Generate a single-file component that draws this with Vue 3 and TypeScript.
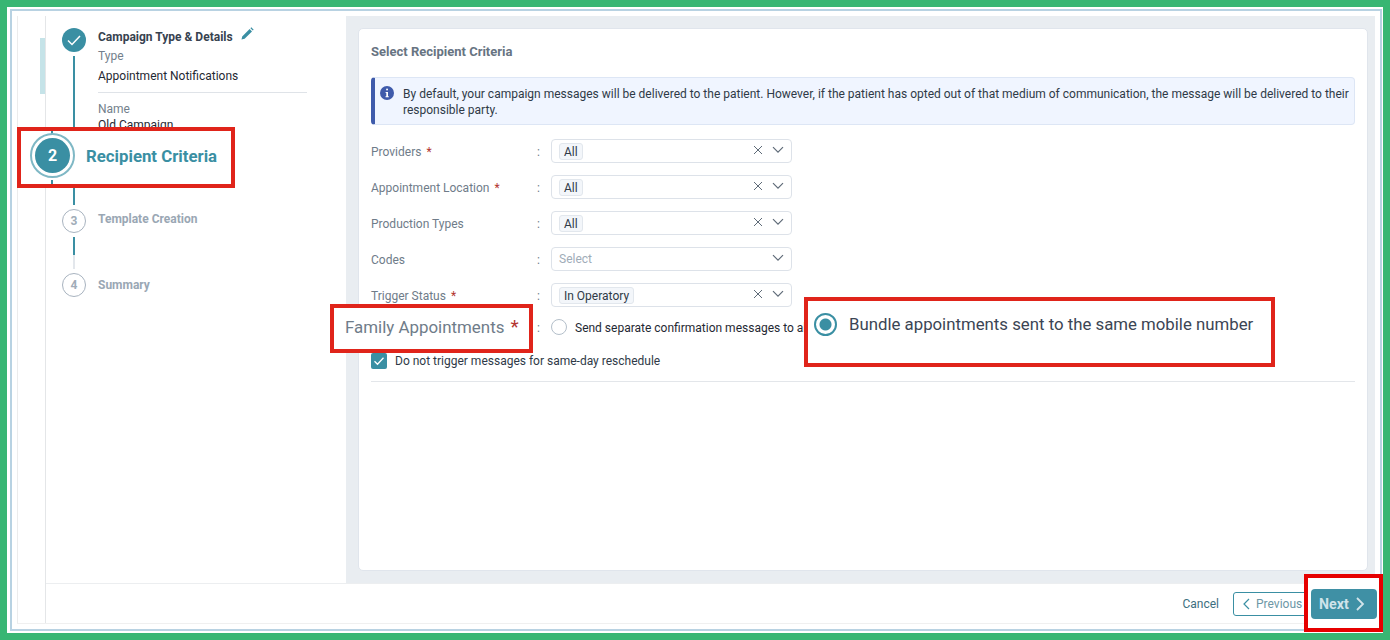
<script setup lang="ts">
interface Criteria {
  label: string
  required: boolean
  tag?: string
}

const criteria: Criteria[] = [
  { label: 'Providers', required: true, tag: 'All' },
  { label: 'Appointment Location', required: true, tag: 'All' },
  { label: 'Production Types', required: false, tag: 'All' },
  { label: 'Codes', required: false },
  { label: 'Trigger Status', required: true, tag: 'In Operatory' },
]
</script>

<template>
  <div class="screen">
    <div class="window">
      <div class="shell">
        <div class="rail"><div class="rail-mark"></div></div>

        <div class="content">
          <div class="workspace">
            <aside class="sidebar">
              <div class="step step-first">
                <div class="step-track">
                  <span class="dot dot-done">
                    <svg width="14" height="14" viewBox="0 0 14 14" fill="none">
                      <path d="M1 7.5l4 4L13 3" stroke="#fff" stroke-width="1.5" />
                    </svg>
                  </span>
                  <span class="line"></span>
                </div>
                <div class="step-body">
                  <div class="step-title">
                    Campaign Type &amp; Details
                    <svg class="pencil" width="13" height="13" viewBox="0 0 13 13">
                      <path d="M0.5 12.5l0.7-3.1L8.6 2l2.4 2.4-7.4 7.4zM9.4 1.2l0.9-0.9 2.4 2.4-0.9 0.9z" fill="#3a8fa3" />
                    </svg>
                  </div>
                  <div class="meta-label">Type</div>
                  <div class="meta-value">Appointment Notifications</div>
                  <div class="meta-rule"></div>
                  <div class="meta-label">Name</div>
                  <div class="meta-value">Old Campaign</div>
                </div>
              </div>

              <div class="step step-third">
                <div class="step-track">
                  <span class="dot">3</span>
                  <span class="line line-split"></span>
                </div>
                <div class="step-title step-title-muted">Template Creation</div>
              </div>

              <div class="step">
                <div class="step-track"><span class="dot">4</span></div>
                <div class="step-title step-title-muted step-title-last">Summary</div>
              </div>
            </aside>

            <main class="panel">
              <section class="card">
                <h2 class="card-title">Select Recipient Criteria</h2>

                <div class="notice">
                  <svg class="notice-icon" width="14" height="14" viewBox="0 0 14 14">
                    <circle cx="7" cy="7" r="7" fill="#3f5bab" />
                    <rect x="6.1" y="2.6" width="1.9" height="1.9" rx="0.9" fill="#fff" />
                    <path d="M5.6 6h2.4v4.2h0.8v1H5.5v-1h0.8V7H5.6z" fill="#fff" />
                  </svg>
                  <p>
                    By default, your campaign messages will be delivered to the patient. However, if the patient has
                    opted out of that medium of communication, the message will be delivered to their responsible party.
                  </p>
                </div>

                <div class="form">
                  <div v-for="item in criteria" :key="item.label" class="form-row">
                    <label class="form-label">
                      {{ item.label }}
                      <span v-if="item.required" class="req">*</span>
                    </label>
                    <span class="colon">:</span>
                    <div class="select">
                      <span v-if="item.tag" class="tag">{{ item.tag }}</span>
                      <span v-else class="placeholder">Select</span>
                      <svg v-if="item.tag" class="clear" width="10" height="10" viewBox="0 0 10 10" fill="none">
                        <path d="M1 1l8 8M9 1l-8 8" stroke="#5f6b78" stroke-width="1" />
                      </svg>
                      <svg class="chevron" width="12" height="8" viewBox="0 0 12 8" fill="none">
                        <path d="M1 1.2l5 5 5-5" stroke="#5f6b78" stroke-width="1.2" />
                      </svg>
                    </div>
                  </div>

                  <div class="form-row form-row-radio">
                    <span></span>
                    <span class="colon">:</span>
                    <div class="radio-option">
                      <span class="radio"></span>
                      <span>Send separate confirmation messages to all</span>
                    </div>
                  </div>
                </div>

                <div class="check-row">
                  <span class="checkbox">
                    <svg width="12" height="12" viewBox="0 0 12 12" fill="none">
                      <path d="M1.5 6.3l3 3L10.5 2.8" stroke="#fff" stroke-width="1.3" />
                    </svg>
                  </span>
                  Do not trigger messages for same-day reschedule
                </div>
                <div class="card-rule"></div>
              </section>
            </main>
          </div>

          <footer class="footer">
            <span class="cancel">Cancel</span>
            <button class="prev" type="button">
              <svg width="9" height="12" viewBox="0 0 9 12" fill="none">
                <path d="M7 1L2 6l5 5" stroke="#3a8fa3" stroke-width="1.2" />
              </svg>
              Previous
            </button>
          </footer>
        </div>
      </div>
    </div>

    <!-- red annotation boxes laid over the screenshot -->
    <div class="callout callout-step">
      <span class="stub stub-top"></span>
      <span class="big-dot"><span>2</span></span>
      <span class="stub stub-bottom"></span>
      <span class="callout-step-text">Recipient Criteria</span>
    </div>

    <div class="callout callout-family">
      Family Appointments <span class="req">*</span>
    </div>

    <div class="callout callout-bundle">
      <span class="big-radio"></span>
      Bundle appointments sent to the same mobile number
    </div>

    <div class="callout callout-next">
      <button class="next" type="button">
        Next
        <svg width="11" height="14" viewBox="0 0 11 14" fill="none">
          <path d="M2 1L8 7l-6 6" stroke="#d3e4ea" stroke-width="1.8" />
        </svg>
      </button>
    </div>
  </div>
</template>

<style>
html,
body {
  margin: 0;
  padding: 0;
}
</style>

<style scoped>
.screen {
  position: relative;
  width: 1390px;
  height: 640px;
  box-sizing: border-box;
  border: 7px solid #38b673;
  background: #fff;
  overflow: hidden;
  font-family: Roboto, "Liberation Sans", sans-serif;
  font-size: 12px;
  color: #1f2933;
}

.window {
  height: 622px;
  margin: 2px 1px 0 3px;
  box-sizing: border-box;
  border: 2px solid #b8d2e2;
  padding: 5px 5px 5px 5px;
  background: #fff;
}

.shell {
  display: flex;
  height: 100%;
  box-sizing: border-box;
  border-left: 1px solid #ececec;
  border-bottom: 1px solid #f0f0f0;
}

.rail {
  width: 27px;
  flex: none;
  border-right: 1px solid #e4e6e8;
}

.rail-mark {
  width: 5px;
  height: 56px;
  margin: 22px 0 0 22px;
  background: #c5e3e8;
}

.content {
  flex: 1;
  min-width: 0;
  display: flex;
  flex-direction: column;
}

.workspace {
  flex: 1;
  min-height: 0;
  display: flex;
  border-bottom: 1px solid #eceef0;
}

.sidebar {
  width: 300px;
  flex: none;
  box-sizing: border-box;
  padding: 12px 0 0 16px;
}

.step {
  display: flex;
  gap: 12px;
}

.step-first {
  height: 181px;
}

.step-third {
  height: 64px;
}

.step-track {
  width: 24px;
  flex: none;
  display: flex;
  flex-direction: column;
  align-items: center;
}

.dot {
  width: 24px;
  height: 24px;
  flex: none;
  box-sizing: border-box;
  border: 1.5px solid #a8b3bf;
  border-radius: 50%;
  display: flex;
  align-items: center;
  justify-content: center;
  font-weight: 700;
  font-size: 12px;
  color: #a0acb8;
}

.dot-done {
  border: none;
  background: #3a8fa3;
}

.line {
  width: 2px;
  flex: 1;
  margin: 4px 0;
  background: #3a8fa3;
}

.line-split {
  background: linear-gradient(#3a8fa3 0 18px, #e3e7ec 18px);
}

.step-body {
  width: 209px;
}

.step-title {
  height: 16px;
  margin-top: -1px;
  line-height: 16px;
  font-weight: 700;
  font-size: 12px;
  color: #37424f;
}

.step-title-muted {
  margin-top: 2px;
  color: #9aa7b4;
}

.step-title-last {
  margin-top: 4px;
}

.pencil {
  margin-left: 5px;
  vertical-align: 1px;
}

.meta-label {
  margin-top: 5px;
  line-height: 16px;
  color: #737f8c;
}

.meta-value {
  margin-top: 4px;
  line-height: 16px;
  color: #1f2933;
}

.meta-rule {
  height: 1px;
  margin: 8px 0 8px;
  background: #dfe3e8;
}

.meta-rule + .meta-label {
  margin-top: 0;
}

.meta-rule + .meta-label + .meta-value {
  margin-top: 0;
}

.panel {
  flex: 1;
  min-width: 0;
  box-sizing: border-box;
  padding: 12px 7px 12px 12px;
  background: #e9edf1;
}

.card {
  height: 100%;
  box-sizing: border-box;
  border: 1px solid #e0e5ec;
  border-radius: 5px;
  background: #fff;
  padding: 0 12px;
}

.card-title {
  margin: 14px 0 17px;
  line-height: 17px;
  font-size: 13px;
  font-weight: 700;
  color: #677482;
}

.notice {
  display: flex;
  gap: 9px;
  height: 48px;
  box-sizing: border-box;
  padding: 8px 0 0 5px;
  border: 1px solid #dde6f5;
  border-left: 4px solid #3f5bab;
  border-radius: 4px;
  background: #f0f5ff;
}

.notice-icon {
  flex: none;
}

.notice p {
  margin: 0;
  line-height: 16px;
  color: #2f3a47;
}

.form {
  margin-top: 14px;
  display: flex;
  flex-direction: column;
  gap: 12px;
}

.form-row {
  display: grid;
  grid-template-columns: 166px 14px 241px;
  align-items: center;
  height: 24px;
}

.form-row-radio {
  height: 16px;
  grid-template-columns: 166px 14px auto;
}

.form-label {
  padding-top: 1px;
  color: #6f7c89;
}

.req {
  margin-left: 2px;
  color: #b3342f;
}

.colon {
  padding-top: 2px;
  color: #6f7c89;
}

.select {
  height: 24px;
  box-sizing: border-box;
  border: 1px solid #dde2e9;
  border-radius: 4px;
  display: flex;
  align-items: center;
  padding: 0 7px;
  color: #2f3a47;
}

.tag {
  height: 17px;
  line-height: 16px;
  padding: 0 4px;
  box-sizing: border-box;
  border: 1px solid #e2e7ed;
  border-radius: 3px;
  background: #f3f6fa;
}

.placeholder {
  color: #a0acb8;
}

.clear {
  margin-left: auto;
  margin-top: -2px;
}

.chevron {
  margin-left: 9px;
  margin-top: -2px;
}

.placeholder + .chevron {
  margin-left: auto;
}

.radio-option {
  display: flex;
  align-items: center;
  gap: 8px;
  white-space: nowrap;
  color: #1f2933;
}

.radio-option span:last-child {
  padding-top: 1px;
}

.radio {
  width: 16px;
  height: 16px;
  box-sizing: border-box;
  border: 1px solid #b4bfca;
  border-radius: 50%;
}

.check-row {
  display: flex;
  align-items: center;
  gap: 8px;
  height: 16px;
  margin-top: 18px;
  color: #2f3a47;
}

.checkbox {
  width: 16px;
  height: 16px;
  border-radius: 2px;
  background: #3a8fa3;
  display: flex;
  align-items: center;
  justify-content: center;
}

.card-rule {
  height: 1px;
  margin-top: 12px;
  background: #e3e6ea;
}

.footer {
  height: 39px;
  flex: none;
  display: flex;
  align-items: center;
  justify-content: flex-end;
  gap: 14px;
}

.cancel {
  color: #3d6f80;
}

.prev {
  width: 142px;
  height: 24px;
  padding: 0 0 0 8px;
  display: flex;
  align-items: center;
  gap: 5px;
  border: 1px solid #3a8fa3;
  border-radius: 3px;
  background: #fff;
  font: inherit;
  color: #6d97a6;
}

.callout {
  position: absolute;
  box-sizing: border-box;
  border: 4px solid #e0241a;
  background: #fff;
  display: flex;
  align-items: center;
}

.callout-step {
  left: 10px;
  top: 120px;
  width: 218px;
  height: 61px;
}

.stub {
  position: absolute;
  left: 30px;
  width: 2px;
  background: #3a8fa3;
}

.stub-top {
  top: 0;
  height: 3px;
}

.stub-bottom {
  bottom: 0;
  height: 4px;
}

.big-dot {
  position: absolute;
  left: 9px;
  top: 2px;
  width: 45px;
  height: 45px;
  box-sizing: border-box;
  border: 2px solid #7fb8c5;
  border-radius: 50%;
  background: #fff;
  display: flex;
  align-items: center;
  justify-content: center;
}

.big-dot span {
  width: 35px;
  height: 35px;
  border-radius: 50%;
  background: #3a8fa3;
  display: flex;
  align-items: center;
  justify-content: center;
  font-size: 16px;
  font-weight: 700;
  color: #fff;
}

.callout-step-text {
  margin-left: 65px;
  margin-top: -4px;
  font-size: 16.8px;
  font-weight: 700;
  color: #3a8fa3;
}

.callout-family {
  left: 323px;
  top: 297px;
  width: 203px;
  height: 49px;
  padding: 0 0 4px 11px;
  font-size: 16.9px;
  color: #6f7c89;
  gap: 6px;
}

.callout-family .req {
  margin: 0;
  font-size: 19px;
}

.callout-bundle {
  left: 797px;
  top: 290px;
  width: 471px;
  height: 70px;
  align-items: flex-start;
  padding: 12px 0 0 6px;
  font-size: 16.8px;
  line-height: 22px;
  color: #3b4554;
}

.big-radio {
  width: 23px;
  height: 23px;
  flex: none;
  margin-right: 12px;
  box-sizing: border-box;
  border: 2px solid #3a8fa3;
  border-radius: 50%;
  background: radial-gradient(circle, #3a8fa3 0 5.5px, #fff 6.5px);
}

.callout-next {
  left: 1297px;
  top: 567px;
  width: 79px;
  height: 58px;
  border-color: #e60000;
  background: transparent;
}

.callout-next::before {
  content: '';
  position: absolute;
  inset: 0;
  background: #fff;
}

.next {
  position: absolute;
  left: 3px;
  top: 11px;
  width: 66px;
  height: 30px;
  padding: 0 0 0 8px;
  border: none;
  border-radius: 4px;
  background: #3f90a5;
  display: flex;
  align-items: center;
  gap: 6px;
  font: inherit;
  font-size: 14.2px;
  font-weight: 700;
  color: #cfe3ea;
}
</style>
